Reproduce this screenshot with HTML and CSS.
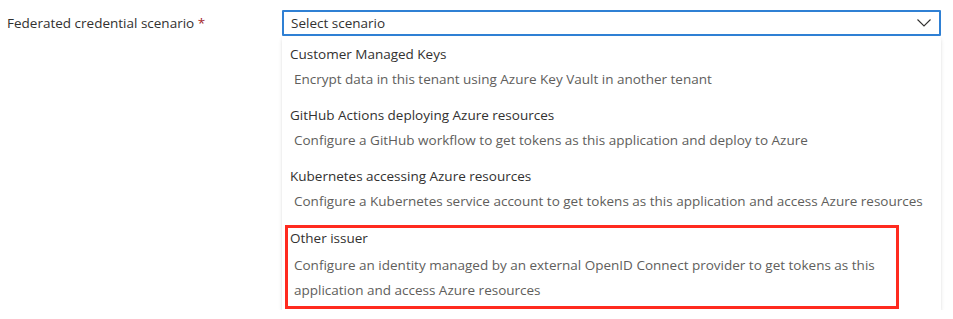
FILE: index.html
```html
<!DOCTYPE html>
<html lang="en">
<head>
    <meta charset="UTF-8">
    <title>Add a credential</title>
<link rel="stylesheet" href="styles.css">
</head>
<body>

    <div class="field-row">
        <label class="field-label" for="scenario">Federated credential scenario <span class="required">*</span></label>

        <div class="dropdown">
            <div class="dropdown-title" id="scenario">
                <span>Select scenario</span>
                <svg class="chevron" width="14" height="8" viewBox="0 0 14 8">
                    <polyline points="0.5,0.5 7,7 13.5,0.5" fill="none" stroke="#323130" stroke-width="1.1"/>
                </svg>
            </div>

            <!-- Options list -->
            <div class="dropdown-list">
                <div class="option">
                    <div class="option-title">Customer Managed Keys</div>
                    <div class="option-desc">Encrypt data in this tenant using Azure Key Vault in another tenant</div>
                </div>
                <div class="option">
                    <div class="option-title">GitHub Actions deploying Azure resources</div>
                    <div class="option-desc">Configure a GitHub workflow to get tokens as this application and deploy to Azure</div>
                </div>
                <div class="option">
                    <div class="option-title">Kubernetes accessing Azure resources</div>
                    <div class="option-desc">Configure a Kubernetes service account to get tokens as this application and access Azure resources</div>
                </div>
                <div class="option option-marked">
                    <div class="option-title">Other issuer</div>
                    <div class="option-desc">Configure an identity managed by an external OpenID Connect provider to get tokens as this application and access Azure resources</div>
                </div>
            </div>
        </div>
    </div>

</body>
</html>
```

FILE: styles.css
```css
    /* Base */
    body {
        margin: 0;
        background: #fff;
        font-family: 'Open Sans', 'Noto Sans', sans-serif;
        font-size: 13.5px;
        color: #323130;
    }

    .field-row {
        display: flex;
        align-items: flex-start;
        padding: 10px 0 0 7px;
    }

    .field-label {
        width: 275px;
        line-height: 26px;
    }

    .required {
        color: #a4262c;
    }

    /* Dropdown */
    .dropdown {
        width: 659px;
    }

    .dropdown-title {
        display: flex;
        align-items: center;
        justify-content: space-between;
        height: 22px;
        padding: 0 8px 0 7px;
        border: 2px solid #2f80d4;
        border-radius: 1px;
    }

    .chevron {
        display: block;
    }

    .dropdown-list {
        margin-top: 1px;
        padding-bottom: 1px;
        background: #fff;
        box-shadow: 0 1.6px 3.6px rgba(0, 0, 0, 0.13), 0 0.3px 0.9px rgba(0, 0, 0, 0.11);
    }

    .option {
        padding: 7px 8px 6px 8px;
    }

    .option-title {
        line-height: 20px;
        color: #323130;
    }

    .option-desc {
        margin-top: 3px;
        padding-left: 4px;
        line-height: 25px;
        color: #605e5c;
    }

    /* Red annotation around the last option */
    .option-marked {
        margin: 5px 42px 0 3px;
        padding: 0 4px 3px 2px;
        border: 3px solid #ff2a1f;
    }

    .option-marked .option-desc {
        margin-top: 5px;
    }
```
